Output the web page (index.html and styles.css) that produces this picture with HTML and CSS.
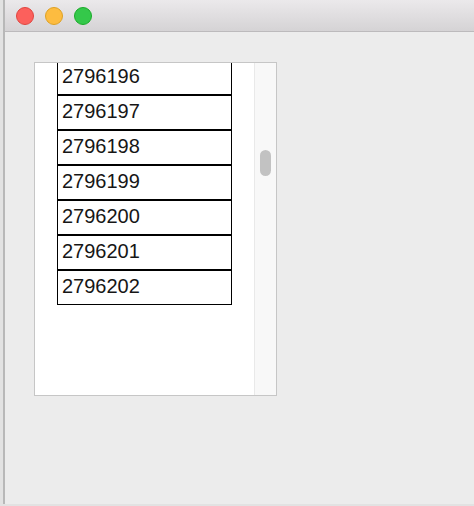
FILE: index.html
```html
<!DOCTYPE html>
<html>
<head>
<meta charset="utf-8">
<link rel="stylesheet" href="styles.css">
</head>
<body>
<div class="window">
  <div class="titlebar">
    <span class="light red"></span>
    <span class="light yellow"></span>
    <span class="light green"></span>
  </div>
  <div class="content">
    <div class="listbox">
      <div class="listarea">
        <div class="column">
          <div class="cell">2796196</div>
          <div class="cell">2796197</div>
          <div class="cell">2796198</div>
          <div class="cell">2796199</div>
          <div class="cell">2796200</div>
          <div class="cell">2796201</div>
          <div class="cell">2796202</div>
        </div>
      </div>
      <div class="scrollbar">
        <div class="thumb"></div>
      </div>
    </div>
  </div>
</div>
</body>
</html>
```

FILE: styles.css
```css
html, body {
  margin: 0;
  padding: 0;
  width: 474px;
  height: 506px;
  overflow: hidden;
  background: #e2e2e2;
}

.window {
  margin-left: 3px;
  width: 469px;
  height: 504px;
  border-left: 2px solid #b8b8b8;
  background: #ececec;
  display: flex;
  flex-direction: column;
}

.titlebar {
  height: 31px;
  border-bottom: 1px solid #bcbabc;
  background: linear-gradient(to bottom, #ebe9eb 0%, #d5d3d5 100%);
  display: flex;
  align-items: center;
  gap: 11px;
  padding-left: 11px;
  box-sizing: content-box;
}

.light {
  width: 16px;
  height: 16px;
  border-radius: 50%;
  border: 1px solid;
  margin-top: 1px;
}
.red { background: #fc605c; border-color: #e0443e; }
.yellow { background: #fdbc40; border-color: #dea123; }
.green { background: #34c84a; border-color: #1aab29; }

.content {
  flex: 1;
  padding: 30px 0 0 29px;
}

.listbox {
  width: 241px;
  height: 332px;
  border: 1px solid #c6c6c6;
  background: #ffffff;
  display: flex;
  overflow: hidden;
}

.listarea {
  flex: 1;
  padding-left: 22px;
  overflow: hidden;
}

.column {
  width: 175px;
  margin-top: -3px;
}

.cell {
  box-sizing: border-box;
  height: 35px;
  border: 1px solid #000;
  padding: 0 0 3px 4px;
  font-family: "Liberation Sans", Arial, sans-serif;
  font-size: 20px;
  line-height: 30px;
  color: #161616;
}

.scrollbar {
  width: 21px;
  border-left: 1px solid #e9e9e9;
  background: #f8f8f8;
  position: relative;
}

.thumb {
  position: absolute;
  left: 5px;
  top: 87px;
  width: 11px;
  height: 26px;
  border-radius: 6px;
  background: #c2c2c2;
}
```
